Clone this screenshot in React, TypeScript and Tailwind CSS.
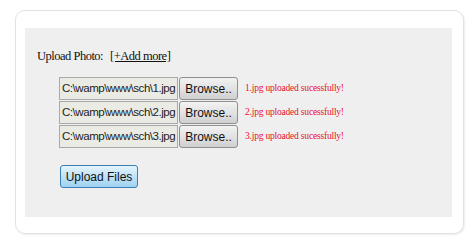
const files = ["1", "2", "3"];

export default function App() {
  return (
    <div className="h-[241px] w-[474px] bg-white pl-[15px] pt-[10px]">
      <div className="h-[224px] w-[449px] rounded-[10px] border border-[#e2e2e2] bg-white pl-[9px] pt-[17px] shadow-[1px_1px_2px_rgba(0,0,0,0.08)]">
        <div className="h-[189px] w-[427px] bg-[#efefef] pl-[12px] pt-[20px] font-['Liberation_Serif',serif]">
          <div className="flex items-baseline gap-[7px] text-[12.5px] leading-[16px] tracking-[-0.5px] text-[#111]">
            <span>Upload Photo:</span>
            <a className="text-[#111] underline">[+Add more]</a>
          </div>
          <div className="mt-[13px] flex flex-col gap-[1px] pl-[22px]">
            {files.map((n) => (
              <div key={n} className="flex h-[23px] items-center">
                <div className="flex h-[23px] w-[119px] items-center overflow-hidden whitespace-nowrap border border-[#a9a9a9] bg-[#ebebe6] pl-[2px] font-['Liberation_Sans',sans-serif] text-[11.5px] tracking-[-0.45px] text-[#222]">
                  {`C:\\wamp\\www\\sch\\${n}.jpg`}
                </div>
                <button className="ml-[1px] flex h-[23px] w-[59px] items-center justify-center rounded-[3px] border border-[#8e8f8f] bg-gradient-to-b from-[#f2f2f2] via-[#e3e3e3] to-[#cfcfcf] font-['Liberation_Sans',sans-serif] text-[12px] text-[#111]">
                  Browse..
                </button>
                <span className="ml-[7px] text-[9.5px] tracking-[-0.2px] text-[#e8102a]">
                  {n}.jpg uploaded sucessfully!
                </span>
              </div>
            ))}
          </div>
          <button className="ml-[23px] mt-[17px] flex h-[23px] w-[78px] items-center justify-center rounded-[3px] border border-[#3c7fb1] bg-gradient-to-b from-[#e5f4fc] via-[#bfe3f8] to-[#9fd2f1] font-['Liberation_Sans',sans-serif] text-[12px] text-[#111]">
            Upload Files
          </button>
        </div>
      </div>
    </div>
  );
}
